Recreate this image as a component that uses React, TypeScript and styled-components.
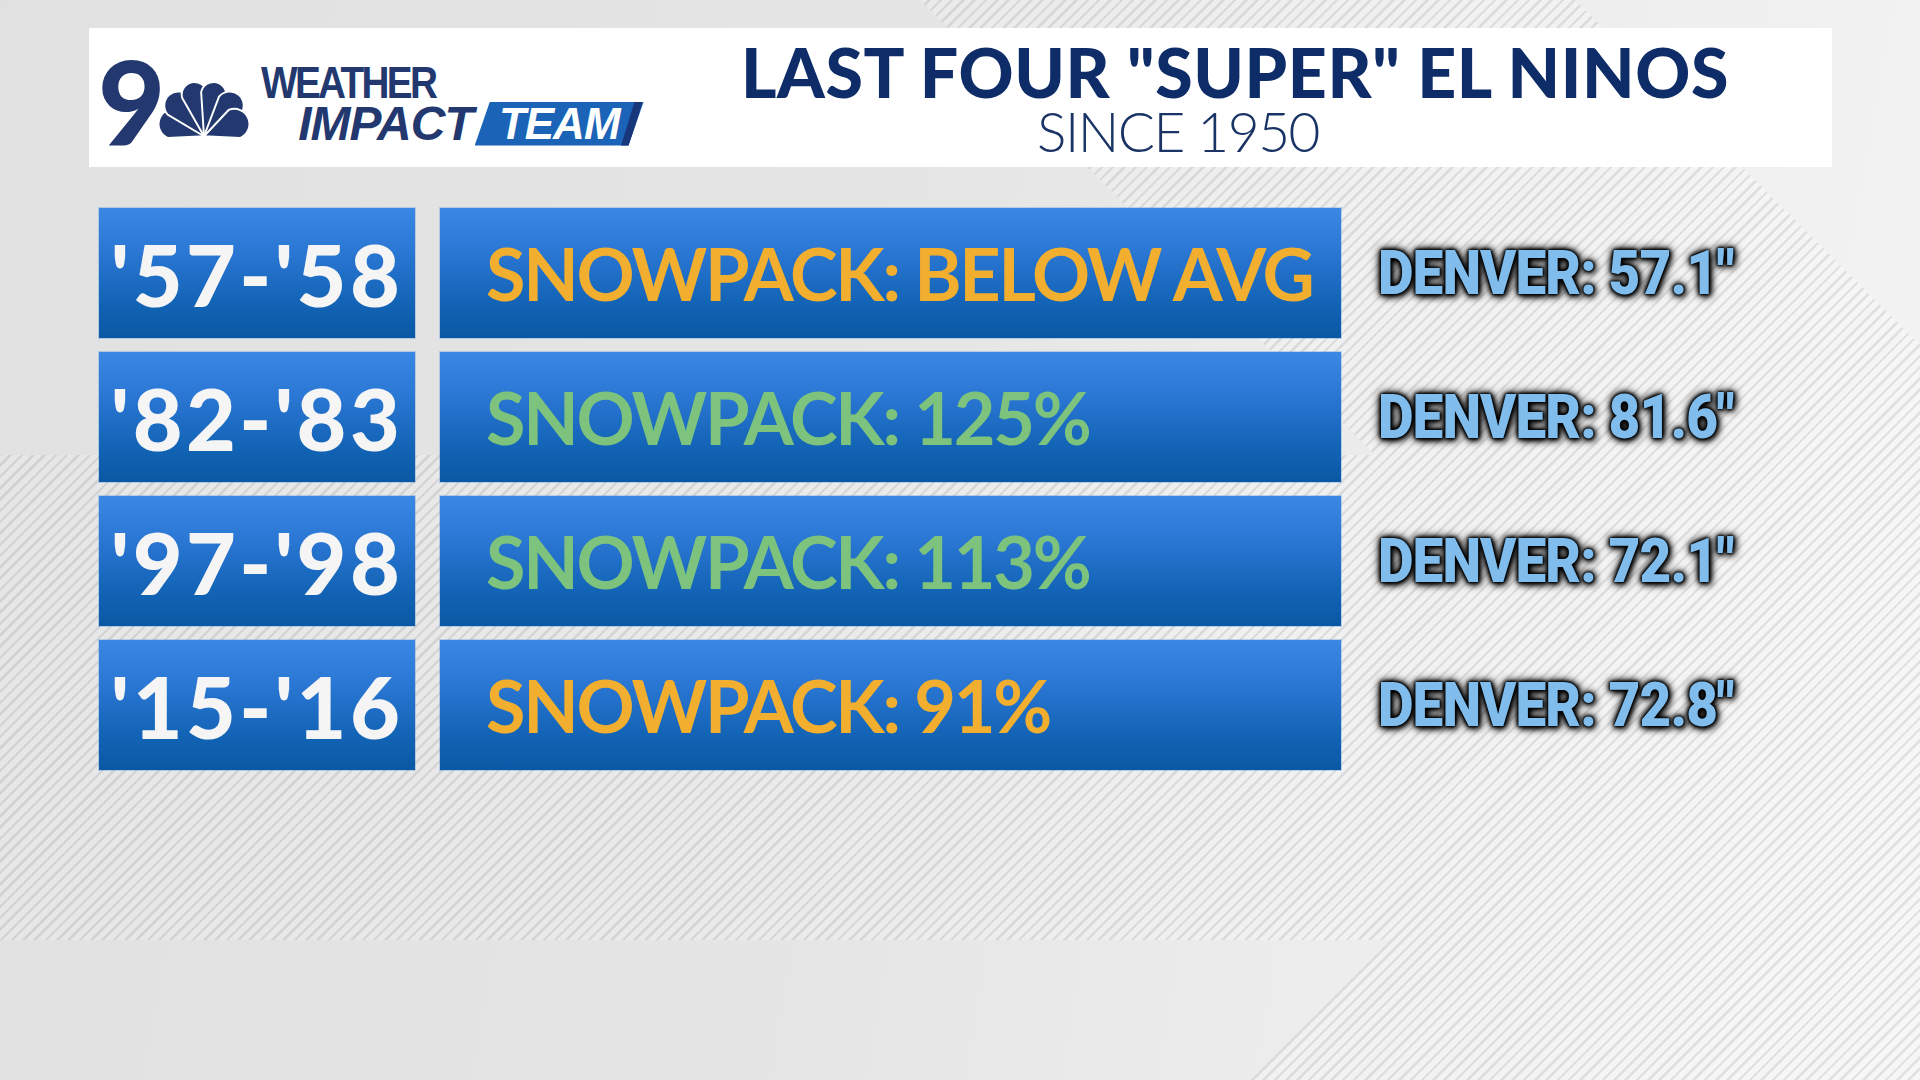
import styled, { createGlobalStyle } from "styled-components";

const GlobalStyle = createGlobalStyle`
    html, body {
        margin: 0;
        padding: 0;
        width: 1920px;
        height: 1080px;
        overflow: hidden;
        background: #e4e4e4;
    }
`

const Page = styled.div`
    position: relative;
    width: 1920px;
    height: 1080px;
    overflow: hidden;
    background: linear-gradient(100deg, #e1e1e1 0%, #e5e5e5 45%, #eeeeee 75%, #f4f4f4 100%);
    font-family: "Lato", "Liberation Sans", sans-serif;
`

// decorative hatch band behind everything
const Hatch = styled.div`
    position: absolute;
    inset: 0;
    clip-path: polygon(920px 0, 1575px 0, 1920px 345px, 1920px 1080px, 1250px 1080px, 1390px 940px, 0 940px, 0 455px, 1375px 455px);
    background:
        repeating-linear-gradient(135deg, rgba(0,0,0,0.085) 0 2.5px, transparent 2.5px 8px),
        linear-gradient(100deg, rgba(255,255,255,0.15), rgba(255,255,255,0.3));
`

const Content = styled.div`
    position: relative;
    padding: 28px 88px 0 89px;
    display: flex;
    flex-direction: column;
`

const Header = styled.header`
    height: 139px;
    background: #fff;
    display: flex;
    align-items: center;
    padding-left: 9px;
`

const Logo = styled.div`
    display: flex;
    align-items: flex-end;
    height: 86px;
    margin-top: 6px;
`

const Nine = styled.span`
    font-family: "Lato", sans-serif;
    font-weight: 900;
    font-size: 116px;
    line-height: 86px;
    height: 86px;
    color: #22386f;
    letter-spacing: -4px;
    margin-top: -12px;
`

const Peacock = styled.svg`
    width: 92px;
    height: 58px;
    margin-bottom: 6px;
    margin-left: -3px;
`

const WordMark = styled.div`
    display: flex;
    flex-direction: column;
    margin-left: 11px;
    margin-bottom: -2px;
`

const Weather = styled.span`
    display: inline-block;
    font-family: "Liberation Sans", sans-serif;
    font-weight: 700;
    font-size: 44px;
    line-height: 38px;
    color: #22386f;
    letter-spacing: -3px;
    transform: scaleX(0.88);
    transform-origin: left center;
`

const ImpactLine = styled.div`
    display: flex;
    align-items: center;
    margin-left: 37px;
`

const Impact = styled.span`
    font-family: "Liberation Sans", sans-serif;
    font-weight: 700;
    font-style: italic;
    font-size: 48px;
    line-height: 44px;
    color: #22386f;
    letter-spacing: -1px;
`

const TeamBox = styled.span`
    position: relative;
    width: 169px;
    height: 44px;
    margin-left: 2px;
    background: #1b63b6;
    clip-path: polygon(9% 0, 100% 0, 91% 100%, 0 100%);
    display: flex;
    align-items: center;
    justify-content: center;
    font-family: "Liberation Sans", sans-serif;
    font-weight: 700;
    font-style: italic;
    font-size: 44px;
    color: #fff;
    letter-spacing: -1px;
    &::after {
        content: "";
        position: absolute;
        right: 9%;
        top: 0;
        bottom: 0;
        width: 8px;
        background: #18377a;
        transform: skewX(-17deg);
        transform-origin: bottom;
    }
`

const TitleBlock = styled.div`
    margin-left: auto;
    margin-right: 103px;
    display: flex;
    flex-direction: column;
    align-items: center;
    margin-top: 4px;
`

const Title = styled.h1`
    margin: 0;
    font-family: "Lato", sans-serif;
    font-weight: 900;
    font-size: 68px;
    line-height: 62px;
    color: #0e2d68;
    letter-spacing: 0.6px;
    white-space: nowrap;
`

const Subtitle = styled.div`
    font-family: "Lato", sans-serif;
    font-weight: 300;
    font-size: 55px;
    line-height: 56px;
    color: #1b3466;
    letter-spacing: -1.5px;
    margin-right: 114px;
    white-space: nowrap;
`

const Rows = styled.div`
    margin-top: 41px;
    padding-left: 10px;
    display: flex;
    flex-direction: column;
    gap: 14px;
`

const Row = styled.div`
    display: flex;
    align-items: center;
    height: 130px;
`

const Box = styled.div`
    height: 130px;
    display: flex;
    align-items: center;
    white-space: nowrap;
    background: linear-gradient(180deg, #3b87e6 0%, #2a76d3 35%, #1465b8 70%, #0a58a4 100%);
    box-shadow: 0 0 0 1px rgba(90, 150, 220, 0.35);
`

const YearBox = styled(Box)`
    width: 316px;
    justify-content: center;
    font-family: "Lato", sans-serif;
    font-weight: 900;
    font-size: 86px;
    color: #f5f5f5;
    letter-spacing: 3.4px;
`

const SnowBox = styled(Box)<{ $tone: string }>`
    width: 855px;
    margin-left: 25px;
    padding-left: 46px;
    font-family: "Lato", sans-serif;
    font-weight: 700;
    font-size: 72px;
    letter-spacing: -2.2px;
    color: ${props => props.$tone};
`

const Denver = styled.span`
    display: inline-block;
    margin-left: 37px;
    white-space: nowrap;
    font-family: "Roboto", "Liberation Sans", sans-serif;
    font-weight: 900;
    font-size: 61px;
    color: #80bdec;
    letter-spacing: -1px;
    transform: scaleX(0.9);
    transform-origin: left center;
    text-shadow: 0 0 2px #000, 0 0 3px #000, 0 0 5px #000, 0 0 8px #000, 0 0 11px rgba(0,0,0,0.85), 2px 2px 8px #000;
`

const ORANGE = "#f1ae2f";
const GREEN = "#7dc27d";

interface Season {
    years: string;
    snowpack: string;
    tone: string;
    denver: string;
}

const seasons: Season[] = [
    { years: "'57-'58", snowpack: "SNOWPACK: BELOW AVG", tone: ORANGE, denver: 'DENVER: 57.1"' },
    { years: "'82-'83", snowpack: "SNOWPACK: 125%", tone: GREEN, denver: 'DENVER: 81.6"' },
    { years: "'97-'98", snowpack: "SNOWPACK: 113%", tone: GREEN, denver: 'DENVER: 72.1"' },
    { years: "'15-'16", snowpack: "SNOWPACK: 91%", tone: ORANGE, denver: 'DENVER: 72.8"' },
];

// six fanned feathers from one base point
const feathers = [
    { a: -68, d: 27, r: 12.5 },
    { a: -40, d: 33, r: 11.5 },
    { a: -13, d: 35, r: 10.5 },
    { a: 13, d: 35, r: 10.5 },
    { a: 40, d: 33, r: 11.5 },
    { a: 68, d: 27, r: 12.5 },
];

function featherPath(a: number, d: number, r: number) {
    const rad = (a * Math.PI) / 180;
    const ux = Math.sin(rad), uy = -Math.cos(rad);
    const px = Math.cos(rad), py = Math.sin(rad);
    const cx = ux * d, cy = uy * d;
    const lx = cx - px * r, ly = cy - py * r;
    const rx = cx + px * r, ry = cy + py * r;
    return `M0 0 L${lx.toFixed(2)} ${ly.toFixed(2)} A${r} ${r} 0 1 1 ${rx.toFixed(2)} ${ry.toFixed(2)} Z`;
}

function App() {
    return (
        <Page>
            <GlobalStyle />
            <Hatch />
            <Content>
                <Header>
                    <Logo>
                        <Nine>9</Nine>
                        <Peacock viewBox="-38 -46 76 47">
                            {feathers.map((f, i) => (
                                <path key={i} d={featherPath(f.a, f.d, f.r)} fill="#22386f" stroke="#fff" strokeWidth="1.6" strokeLinejoin="round" />
                            ))}
                        </Peacock>
                        <WordMark>
                            <Weather>WEATHER</Weather>
                            <ImpactLine>
                                <Impact>IMPACT</Impact>
                                <TeamBox>TEAM</TeamBox>
                            </ImpactLine>
                        </WordMark>
                    </Logo>
                    <TitleBlock>
                        <Title>LAST FOUR "SUPER" EL NINOS</Title>
                        <Subtitle>SINCE 1950</Subtitle>
                    </TitleBlock>
                </Header>

                <Rows>
                    {seasons.map(s => (
                        <Row key={s.years}>
                            <YearBox>{s.years}</YearBox>
                            <SnowBox $tone={s.tone}>{s.snowpack}</SnowBox>
                            <Denver>{s.denver}</Denver>
                        </Row>
                    ))}
                </Rows>
            </Content>
        </Page>
    );
}

export default App;
